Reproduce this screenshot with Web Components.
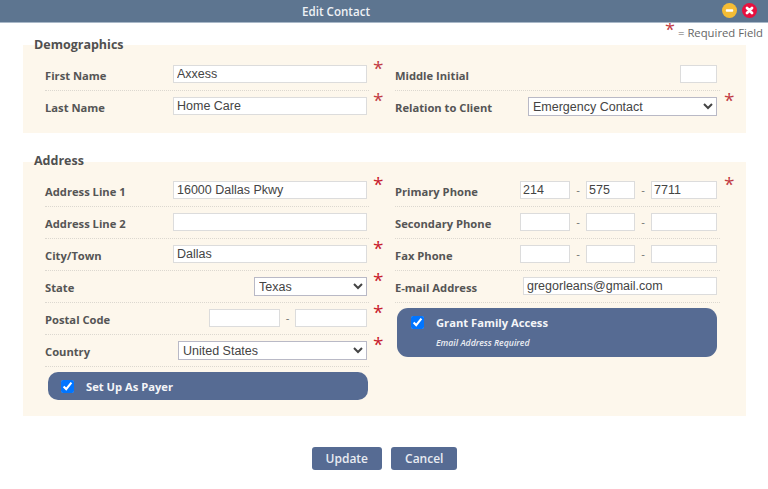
<!DOCTYPE html>
<html>
<head>
<meta charset="utf-8">
<title>Edit Contact</title>
<style>
  html, body { margin: 0; background: #fff; }
  body { font-family: "Open Sans", sans-serif; }
  .right { --row-end: 3px; --banner-left: 2px; }
</style>
</head>
<body>
<edit-contact>
  <form-section heading="Demographics" slot="demographics">
    <div>
      <form-row label="First Name" required soft><text-field value="Axxess" width="194"></text-field></form-row>
      <form-row label="Last Name" required soft last><text-field value="Home Care" width="194"></text-field></form-row>
    </div>
    <div class="right">
      <form-row label="Middle Initial"><text-field width="37"></text-field></form-row>
      <form-row label="Relation to Client" required last soft><select-field value="Emergency Contact" width="189"></select-field></form-row>
    </div>
  </form-section>
  <form-section heading="Address" slot="address">
    <div>
      <form-row label="Address Line 1" required><text-field value="16000 Dallas Pkwy" width="194"></text-field></form-row>
      <form-row label="Address Line 2"><text-field width="194"></text-field></form-row>
      <form-row label="City/Town" required><text-field value="Dallas" width="194"></text-field></form-row>
      <form-row label="State" required><select-field value="Texas" width="113"></select-field></form-row>
      <form-row label="Postal Code" required>
        <split-field widths="71,72" gap="15"></split-field>
      </form-row>
      <form-row label="Country" required><select-field value="United States" width="189"></select-field></form-row>
      <option-banner>Set Up As Payer</option-banner>
    </div>
    <div class="right">
      <form-row label="Primary Phone" required soft><split-field widths="50,49,66" values="214,575,7711" gap="16"></split-field></form-row>
      <form-row label="Secondary Phone"><split-field widths="50,49,66" gap="16"></split-field></form-row>
      <form-row label="Fax Phone"><split-field widths="50,49,66" gap="16"></split-field></form-row>
      <form-row label="E-mail Address"><text-field value="gregorleans@gmail.com" width="194"></text-field></form-row>
      <option-banner note="Email Address Required">Grant Family Access</option-banner>
    </div>
  </form-section>
</edit-contact>

<script>
// shared look of the boxes inside text and split fields
const boxStyle = `
  input {
    box-sizing: border-box;
    display: block;
    height: 18px;
    margin: 0;
    padding: 0 2px;
    border: 1px solid #dcdcdc;
    border-radius: 0;
    outline: none;
    background: #fff;
    color: #444;
    font: 12.5px "Liberation Sans", Arial, sans-serif;
  }
`;

class EditContact extends HTMLElement {
  constructor() {
    super();
    this.attachShadow({ mode: "open" });
    this.shadowRoot.innerHTML = `
      <style>
        :host { display: block; color: #555; }
        header {
          display: flex;
          align-items: center;
          justify-content: center;
          position: relative;
          height: 22px;
          padding-right: 96px;
          background: #5d7590;
          border-bottom: 1px solid #a9b8c8;
          color: #eef1f5;
          font-size: 11.6px;
          font-weight: 600;
        }
        .controls { position: absolute; right: 11px; top: 2.5px; display: flex; gap: 5px; }
        .note {
          display: flex;
          justify-content: flex-end;
          height: 15px;
          padding-right: 5px;
          color: #666;
          font-size: 11.3px;
          line-height: 20px;
        }
        .note b { color: #c23c44; font-weight: 400; font-size: 18px; line-height: 13px; margin-right: 3px; }
        .gap { height: 21px; }
        footer { display: flex; justify-content: center; gap: 9px; margin: 31px 0 0 1px; }
      </style>
      <header>
        <span>Edit Contact</span>
        <div class="controls">
          <svg width="15" height="15" viewBox="0 0 15 15"><circle cx="7.5" cy="7.5" r="7.5" fill="#f5bd35"/><rect x="3.8" y="6.2" width="7.4" height="2.6" rx=".8" fill="#fff"/></svg>
          <svg width="15" height="15" viewBox="0 0 15 15"><circle cx="7.5" cy="7.5" r="7.5" fill="#e8103f"/><path d="M5 5l5 5M10 5l-5 5" stroke="#fff" stroke-width="2.8" stroke-linecap="round"/></svg>
        </div>
      </header>
      <div class="note"><b>*</b><span>= Required Field</span></div>
      <slot name="demographics"></slot>
      <div class="gap"></div>
      <slot name="address"></slot>
      <footer>
        <action-button>Update</action-button>
        <action-button>Cancel</action-button>
      </footer>`;
  }
}

class FormSection extends HTMLElement {
  constructor() {
    super();
    this.attachShadow({ mode: "open" });
    this.shadowRoot.innerHTML = `
      <style>
        :host { display: block; margin: 0 22px 0 23px; }
        h2 {
          margin: 0 0 -7px 11px;
          height: 14px;
          color: #505050;
          font-size: 12.5px;
          font-weight: 700;
          line-height: 14px;
        }
        .panel {
          display: grid;
          grid-template-columns: 350px 1fr;
          padding: 14px 0 10px 22px;
          background: #fdf7ec;
        }
        :host([slot="address"]) h2 { margin-bottom: -6px; }
        :host([slot="address"]) .panel { padding: 13px 0 16px 22px; }
      </style>
      <h2></h2>
      <div class="panel"><slot></slot></div>`;
  }

  connectedCallback() {
    this.shadowRoot.querySelector("h2").textContent = this.getAttribute("heading");
  }
}

class FormRow extends HTMLElement {
  constructor() {
    super();
    this.attachShadow({ mode: "open" });
    this.shadowRoot.innerHTML = `
      <style>
        :host { display: flex; }
        .line {
          display: flex;
          flex: 1;
          justify-content: space-between;
          box-sizing: border-box;
          height: 32px;
          padding: 6px var(--row-end, 2px) 7px 0;
          border-bottom: 1px dotted #dcd8d0;
        }
        :host([last]) .line { border-bottom-color: transparent; }
        label {
          color: #555;
          font-size: 11.2px;
          font-weight: 700;
          line-height: 22px;
          white-space: nowrap;
        }
        .star {
          box-sizing: border-box;
          width: 26px;
          height: 20px;
          padding-left: 4px;
          color: #c8202c;
          font-size: 19px;
          line-height: 18px;
        }
        :host([soft]) .star { color: #c23c44; }
      </style>
      <div class="line"><label></label><slot></slot></div>
      <span class="star"></span>`;
  }

  connectedCallback() {
    this.shadowRoot.querySelector("label").textContent = this.getAttribute("label");
    if (this.hasAttribute("required")) {
      this.shadowRoot.querySelector(".star").textContent = "*";
    }
  }
}

class TextField extends HTMLElement {
  constructor() {
    super();
    this.attachShadow({ mode: "open" });
    this.shadowRoot.innerHTML = `
      <style>
        :host { display: block; }
        ${boxStyle}
        input { padding: 0 3px; }
      </style>
      <input type="text">`;
  }

  connectedCallback() {
    const input = this.shadowRoot.querySelector("input");
    input.setAttribute("value", this.getAttribute("value") || "");
    input.style.width = this.getAttribute("width") + "px";
  }
}

class SplitField extends HTMLElement {
  constructor() {
    super();
    this.attachShadow({ mode: "open" });
    this.shadowRoot.innerHTML = `
      <style>
        :host { display: flex; }
        span {
          color: #777;
          font: 11px/18px "Liberation Sans", Arial, sans-serif;
          text-align: center;
        }
        ${boxStyle}
      </style>`;
  }

  connectedCallback() {
    const widths = this.getAttribute("widths").split(",");
    const values = (this.getAttribute("values") || "").split(",");
    const gap = this.getAttribute("gap");
    widths.forEach((w, i) => {
      if (i > 0) {
        const dash = document.createElement("span");
        dash.textContent = "-";
        dash.style.width = gap + "px";
        this.shadowRoot.append(dash);
      }
      const input = document.createElement("input");
      input.style.width = w + "px";
      input.setAttribute("value", values[i] || "");
      this.shadowRoot.append(input);
    });
  }
}

class SelectField extends HTMLElement {
  constructor() {
    super();
    this.attachShadow({ mode: "open" });
    this.shadowRoot.innerHTML = `
      <style>
        :host { display: block; }
        select {
          box-sizing: border-box;
          display: block;
          height: 19px;
          margin: 0;
          padding: 0;
          border: 1px solid #b9b9c6;
          border-radius: 0;
          outline: none;
          background: #fff;
          color: #444;
          font: 12.5px "Liberation Sans", Arial, sans-serif;
        }
      </style>
      <select><option></option></select>`;
  }

  connectedCallback() {
    const select = this.shadowRoot.querySelector("select");
    select.options[0].textContent = this.getAttribute("value");
    select.style.width = this.getAttribute("width") + "px";
  }
}

class OptionBanner extends HTMLElement {
  constructor() {
    super();
    this.attachShadow({ mode: "open" });
    this.shadowRoot.innerHTML = `
      <style>
        :host { display: block; width: 320px; margin: 5px 0 0 var(--banner-left, 3px); }
        .box {
          display: grid;
          grid-template-columns: 13px 1fr;
          column-gap: 12px;
          align-items: center;
          box-sizing: border-box;
          height: 28px;
          padding: 0 13px;
          background: #566b93;
          border-radius: 10px;
          color: #f4f5f8;
          font-size: 11.2px;
          font-weight: 700;
        }
        input { margin: 0; width: 13px; height: 13px; }
        em { grid-column: 2; color: #eceef3; font-size: 8.7px; font-weight: 600; }
        :host([note]) .box {
          height: 49px;
          grid-template-rows: 28px 1fr;
          padding: 0 13px 7px 14px;
          border-radius: 11px;
        }
      </style>
      <div class="box"><input type="checkbox" checked><span><slot></slot></span></div>`;
  }

  connectedCallback() {
    const note = this.getAttribute("note");
    if (note) {
      const em = document.createElement("em");
      em.textContent = note;
      this.shadowRoot.querySelector(".box").append(em);
    }
  }
}

class ActionButton extends HTMLElement {
  constructor() {
    super();
    this.attachShadow({ mode: "open" });
    this.shadowRoot.innerHTML = `
      <style>
        :host { display: block; }
        button {
          display: block;
          height: 23px;
          padding: 0 14px;
          border: none;
          border-radius: 3px;
          background: #566b93;
          color: #e9ecf2;
          font: 600 12px "Open Sans", sans-serif;
        }
      </style>
      <button><slot></slot></button>`;
  }
}

customElements.define("edit-contact", EditContact);
customElements.define("form-section", FormSection);
customElements.define("form-row", FormRow);
customElements.define("text-field", TextField);
customElements.define("split-field", SplitField);
customElements.define("select-field", SelectField);
customElements.define("option-banner", OptionBanner);
customElements.define("action-button", ActionButton);
</script>
</body>
</html>
